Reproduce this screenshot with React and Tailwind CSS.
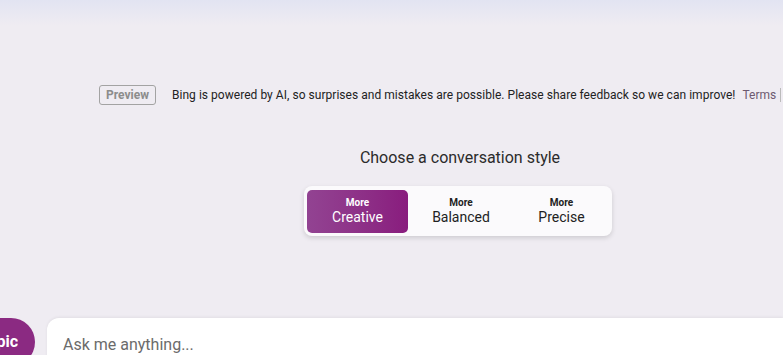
import React from 'react';

const styles = [
  { id: 'creative', label: 'Creative', active: true, w: 'w-[101px]' },
  { id: 'balanced', label: 'Balanced', w: 'w-[106px]' },
  { id: 'precise', label: 'Precise', w: 'w-[95px]' },
];

export default function App() {
  return (
    <div className="w-[783px] h-[355px] overflow-hidden bg-[#efecf2] font-['Roboto',sans-serif] flex flex-col">
      <div className="h-[26px] shrink-0 bg-gradient-to-b from-[#e2e4f2] to-[#efecf2]" />

      <div className="mt-[59px] pl-[99px] flex items-center h-[20px] whitespace-nowrap">
        <span className="h-[20px] px-[6px] flex items-center border border-[#a3a3a3] rounded-[3px] text-[12px] font-bold text-[#8c8c8c]">
          Preview
        </span>
        <span className="ml-[16px] text-[12px] tracking-[0.003em] text-[#222]">
          Bing is powered by AI, so surprises and mistakes are possible. Please share feedback so we can improve!
        </span>
        <span className="ml-[7px] text-[12px] text-[#6d5a70]">Terms</span>
        <span className="ml-[4px] h-[14px] border-l border-[#bbb]" />
      </div>

      <div className="mt-[43px] pl-[137px] text-center text-[16px] text-[#2b2b2b] leading-[20px]">
        Choose a conversation style
      </div>

      <div className="mt-[18px] pl-[304px]">
        <div className="w-[308px] h-[50px] p-[3px] pt-[4px] bg-[#fbfafc] rounded-[8px] shadow-[0_2px_5px_rgba(0,0,0,0.14)] flex">
          {styles.map((s) => (
            <div
              key={s.id}
              className={
                s.active
                  ? `${s.w} rounded-[5px] bg-gradient-to-r from-[#924392] to-[#891c7e] text-white flex flex-col items-center justify-center`
                  : `${s.w} text-[#222] flex flex-col items-center justify-center`
              }
            >
              <span className="text-[10px] font-bold leading-[12px]">More</span>
              <span className="text-[14px] leading-[17px]">{s.label}</span>
            </div>
          ))}
        </div>
      </div>

      <div className="mt-[82px] flex items-start">
        <div className="w-[110px] -ml-[75px] h-[48px] shrink-0 rounded-full bg-[#8b2a82] text-white text-[16px] font-bold flex items-center justify-end pr-[17px] whitespace-nowrap">
          New topic
        </div>
        <div className="ml-[12px] flex-1 h-[60px] bg-white rounded-tl-[12px] shadow-[0_-1px_3px_rgba(0,0,0,0.06)] pl-[16px] pt-[15px] text-[16px] text-[#6b6b6b]">
          Ask me anything...
        </div>
      </div>
    </div>
  );
}
